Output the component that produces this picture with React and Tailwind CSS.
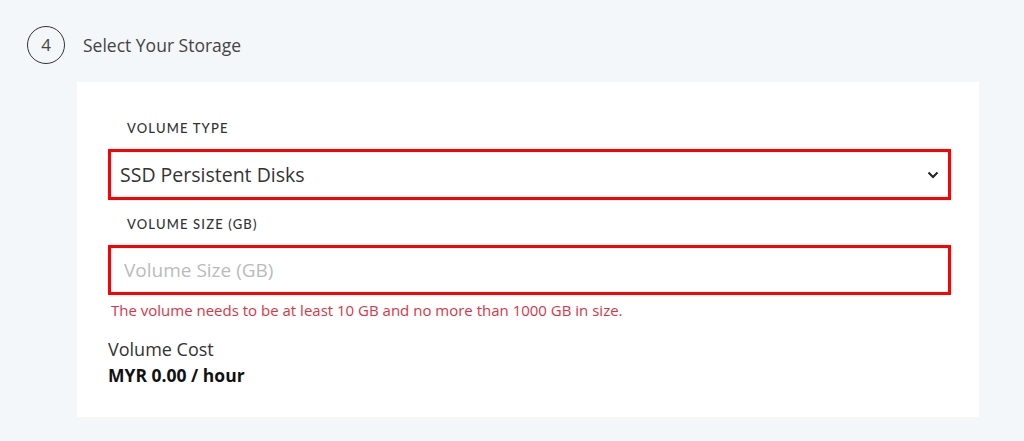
export default function App() {
  return (
    <div className="min-h-[441px] w-full bg-[#f4f7f9] font-['Open_Sans',sans-serif] text-[#333]">
      <div className="flex items-center pl-[27px] pt-[26px]">
        <div className="flex h-[38px] w-[38px] items-center justify-center rounded-full border border-[#333] text-[17px] text-[#444]">
          4
        </div>
        <h2 className="ml-[18px] text-[17.5px] text-[#444]">Select Your Storage</h2>
      </div>

      <div className="mt-[18px] ml-[77px] w-[902px] bg-white pt-[38px] pb-[30px] pl-[31px] pr-[28px]">
        <label className="block pl-[19px] text-[13px] leading-[16px] font-medium tracking-[0.09em] text-[#333] font-['Lato',sans-serif]">
          VOLUME TYPE
        </label>
        <div className="mt-[13px] flex h-[51px] items-center justify-between border-[3px] border-[#ff0000] pl-[9px] pr-[8px]">
          <span className="text-[19.5px] text-[#333]">SSD Persistent Disks</span>
          <svg width="12" height="8" viewBox="0 0 12 8" className="mr-[1px]">
            <polyline points="1.5,1.5 6,6 10.5,1.5" fill="none" stroke="#222" strokeWidth="2" />
          </svg>
        </div>

        <label className="mt-[16px] block pl-[19px] text-[13px] leading-[16px] font-medium tracking-[0.09em] text-[#333] font-['Lato',sans-serif]">
          VOLUME SIZE (GB)
        </label>
        <div className="mt-[13px] flex h-[50px] items-center border-[3px] border-[#ff0000] pl-[13px]">
          <input
            className="w-full bg-transparent text-[19px] outline-none placeholder:text-[#bbb]"
            placeholder="Volume Size (GB)"
          />
        </div>
        <p className="mt-[5px] pl-[3px] text-[15px] leading-[20px] text-[#dc3545]">
          The volume needs to be at least 10 GB and no more than 1000 GB in size.
        </p>

        <p className="mt-[17px] text-[18px] leading-[24px] text-[#333]">Volume Cost</p>
        <p className="mt-[2px] text-[17.5px] leading-[24px] font-bold text-[#111]">MYR 0.00 / hour</p>
      </div>
    </div>
  );
}
